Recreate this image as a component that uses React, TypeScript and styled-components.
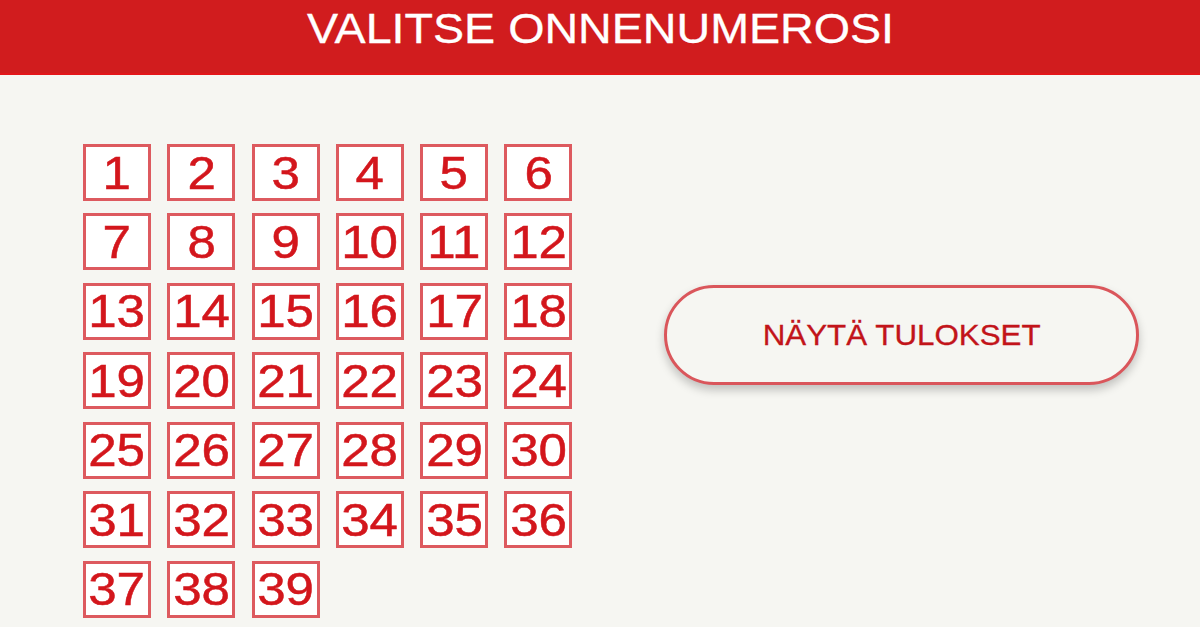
import React from "react";
import styled, { createGlobalStyle } from "styled-components";

const GlobalStyle = createGlobalStyle`
  html, body {
    margin: 0;
    padding: 0;
    background: #f6f6f2;
    font-family: "Liberation Sans", Arial, Helvetica, sans-serif;
  }
  * { box-sizing: border-box; }
`;

const Page = styled.div`
  width: 1200px;
  height: 627px;
  overflow: hidden;
  background: #f6f6f2;
`;

const Header = styled.header`
  height: 75px;
  background: #d11c1e;
  border-bottom: 2px solid #e3161a;
  display: flex;
  justify-content: center;
  padding-top: 5px;
`;

const Title = styled.h1`
  margin: 0;
  color: #ffffff;
  font-weight: 400;
  font-size: 42px;
  line-height: 47px;
  display: inline-block;
  transform: scaleX(1.11);
  white-space: nowrap;
  -webkit-text-stroke: 0.3px #ffffff;
`;

const Main = styled.main`
  display: flex;
  align-items: flex-start;
  padding: 69px 0 0 83px;
`;

const NumberGrid = styled.div`
  display: grid;
  grid-template-columns: repeat(6, 68px);
  grid-auto-rows: 57px;
  column-gap: 16.3px;
  row-gap: 12.45px;
`;

const Cell = styled.button`
  width: 68px;
  height: 57px;
  padding: 0;
  margin: 0;
  background: #ffffff;
  border: 3px solid #dd5a5f;
  display: flex;
  align-items: center;
  justify-content: center;
  overflow: visible;
  cursor: pointer;
  font-family: inherit;
`;

const CellNumber = styled.span`
  display: inline-block;
  color: #d3161c;
  font-size: 46px;
  line-height: 1;
  transform: scaleX(1.11);
  white-space: nowrap;
  -webkit-text-stroke: 0.5px #d3161c;
`;

const ResultsButton = styled.button`
  margin: 141px 0 0 92px;
  width: 475px;
  height: 100px;
  border-radius: 50px;
  border: 3px solid #da565b;
  background: #f6f6f2;
  box-shadow: 0 5px 10px rgba(0, 0, 0, 0.22);
  display: flex;
  align-items: center;
  justify-content: center;
  padding: 0;
  cursor: pointer;
  font-family: inherit;
`;

const ButtonLabel = styled.span`
  display: inline-block;
  color: #c2141a;
  font-size: 29px;
  line-height: 1;
  transform: scaleX(1.08);
  white-space: nowrap;
  -webkit-text-stroke: 0.3px #c2141a;
`;

const numbers = Array.from({ length: 39 }, (_, i) => i + 1);

export default function App() {
  return (
    <>
      <GlobalStyle />
      <Page>
        <Header>
          <Title>VALITSE ONNENUMEROSI</Title>
        </Header>
        <Main>
          <NumberGrid>
            {numbers.map((n) => (
              <Cell key={n} type="button">
                <CellNumber>{n}</CellNumber>
              </Cell>
            ))}
          </NumberGrid>
          <ResultsButton type="button">
            <ButtonLabel>NÄYTÄ TULOKSET</ButtonLabel>
          </ResultsButton>
        </Main>
      </Page>
    </>
  );
}
